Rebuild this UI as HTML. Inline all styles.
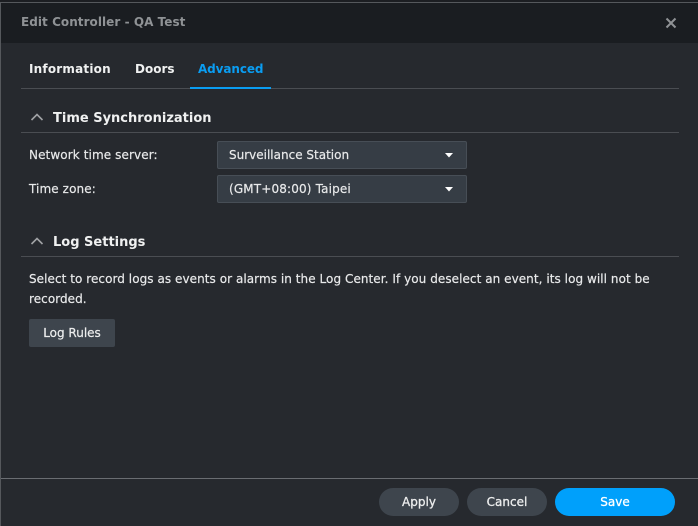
<!DOCTYPE html>
<html><head><meta charset="utf-8"><style>
*{box-sizing:border-box;margin:0;padding:0}
html,body{width:698px;height:526px;overflow:hidden;background:#26292e}
body{position:relative;font-family:"DejaVu Sans","Liberation Sans",sans-serif;font-size:12px;color:#e8e9ea}
.a{position:absolute;white-space:nowrap}
.l{position:absolute;height:1px}
.b{font-weight:bold}
.t{-webkit-text-stroke:.2px currentColor}
.sel{position:absolute;left:217px;width:250px;height:28px;background:#363d45;border:1px solid #474e56;border-radius:2px;line-height:26px;padding-left:11px;color:#e8e9ea;-webkit-text-stroke:.2px #e8e9ea}
.sel svg{position:absolute;left:226px;top:11px}
.btn{position:absolute;top:488px;height:28px;border-radius:14px;background:#3e454d;text-align:center;line-height:28px;color:#eceded;-webkit-text-stroke:.3px #eceded}
</style></head><body>
<div class="a" style="left:0;top:0;width:698px;height:2px;background:#1c1e22"></div>
<div class="l" style="left:0;top:2px;width:698px;background:#55585c"></div>
<div class="a" style="left:0;top:3px;width:698px;height:40px;background:#1a1d21"></div>
<div class="a" style="left:0;top:2px;width:1px;height:524px;background:#55585c"></div>
<div class="a b" style="left:21px;top:15px;color:#8f9295;line-height:15px;letter-spacing:.05px">Edit Controller - QA Test</div>
<svg class="a" style="left:665px;top:17px" width="12" height="12" viewBox="0 0 12 12"><path d="M1.5 1.5L10.5 10.5M10.5 1.5L1.5 10.5" stroke="#8f9295" stroke-width="2" fill="none"/></svg>

<div class="a b" style="left:29px;top:62px;color:#f0f1f1;line-height:15px;letter-spacing:.2px">Information</div>
<div class="a b" style="left:135px;top:62px;color:#f0f1f1;line-height:15px">Doors</div>
<div class="a b" style="left:198px;top:62px;color:#0a9df2;line-height:15px;letter-spacing:-.1px">Advanced</div>
<div class="l" style="left:21px;top:88px;width:658px;background:#4a4d52"></div>
<div class="a" style="left:190px;top:87px;width:81px;height:2px;background:#0a9df2"></div>

<svg class="a" style="left:30px;top:112px" width="14" height="10" viewBox="0 0 14 10"><path d="M1.5 8L7 2.5L12.5 8" stroke="#a0a2a5" stroke-width="1.6" fill="none"/></svg>
<div class="a b" style="left:53px;top:111px;font-size:13px;color:#f0f1f1;line-height:16px">Time Synchronization</div>
<div class="l" style="left:21px;top:132px;width:658px;background:#4a4d52"></div>

<div class="a t" style="left:29px;top:148px;line-height:15px;letter-spacing:.1px">Network time server:</div>
<div class="sel" style="top:141px">Surveillance Station<svg width="10" height="5" viewBox="0 0 10 5"><path d="M1 0H9L5 4.5Z" fill="#fff"/></svg></div>
<div class="a t" style="left:29px;top:182px;line-height:15px;letter-spacing:.1px">Time zone:</div>
<div class="sel" style="top:175px;letter-spacing:.15px">(GMT+08:00) Taipei<svg width="10" height="5" viewBox="0 0 10 5"><path d="M1 0H9L5 4.5Z" fill="#fff"/></svg></div>

<svg class="a" style="left:30px;top:236px" width="14" height="10" viewBox="0 0 14 10"><path d="M1.5 8L7 2.5L12.5 8" stroke="#a0a2a5" stroke-width="1.6" fill="none"/></svg>
<div class="a b" style="left:53px;top:235px;font-size:13px;color:#f0f1f1;line-height:16px">Log Settings</div>
<div class="l" style="left:21px;top:256px;width:658px;background:#4a4d52"></div>

<div class="a t" style="left:29px;top:272px;line-height:15px;letter-spacing:.057px">Select to record logs as events or alarms in the Log Center. If you deselect an event, its log will not be</div>
<div class="a t" style="left:29px;top:292px;line-height:15px;letter-spacing:.057px">recorded.</div>
<div class="a t" style="left:29px;top:319px;width:86px;height:28px;background:#3e454d;border-radius:2px;text-align:center;line-height:28px;color:#eceded">Log Rules</div>

<div class="l" style="left:1px;top:478px;width:697px;background:#6a6d72"></div>
<div class="btn" style="left:379px;width:80px">Apply</div>
<div class="btn" style="left:467px;width:80px">Cancel</div>
<div class="btn" style="left:555px;width:120px;background:#00a0fb;color:#fff;-webkit-text-stroke:.3px #fff">Save</div>
</body></html>
